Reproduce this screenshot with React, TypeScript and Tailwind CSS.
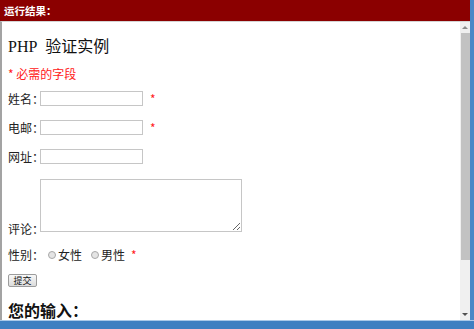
const cjk = { fontFamily: '"Noto Sans CJK SC", sans-serif' };

function Req() {
  return <span className="ml-[7px] text-[12px] leading-none text-[#ff2020]">*</span>;
}

function Field({ label, required }: { label: string; required?: boolean }) {
  return (
    <div className="flex items-center h-[15px]">
      <span className="w-[32px] shrink-0 whitespace-nowrap text-[12px] leading-none text-[#222]">{label}</span>
      <input className="w-[103px] h-[15px] border border-[#c6c6c6] bg-white p-0 outline-none" />
      {required && <Req />}
    </div>
  );
}

function Radio({ label, first }: { label: string; first?: boolean }) {
  return (
    <label className={'flex items-center ' + (first ? 'ml-[8px]' : 'ml-[9px]')}>
      <input
        type="radio"
        name="gender"
        className="appearance-none w-[8px] h-[8px] rounded-full border border-[#a8a8a8] bg-[#e4e4e4] m-0"
      />
      <span className="ml-[2px] text-[12px] leading-none text-[#222]">{label}</span>
    </label>
  );
}

export default function App() {
  return (
    <div className="w-[474px] h-[329px] flex flex-col overflow-hidden bg-white" style={cjk}>
      <div className="flex flex-1 min-h-0">
        <div className="flex-1 flex flex-col min-w-0">
          <div className="h-[21px] shrink-0 bg-[#8b0000] flex items-center pl-[4px] text-white font-bold text-[10.5px]">
            运行结果：
          </div>
          <div className="flex-1 flex min-h-0 border-l-2 border-l-[#a3a3a3] border-t border-t-[#d4d4d4]">
            <div className="flex-1 pl-[6px] flex flex-col">
              <h2
                className="mt-[15px] h-[20px] leading-[20px] text-[16px] text-[#111]"
                style={{ fontFamily: '"Liberation Serif", "Noto Sans CJK SC", serif' }}
              >
                PHP&nbsp; 验证实例
              </h2>
              <p className="mt-[9px] text-[12px] leading-[16px] text-[#ff2020]">* 必需的字段</p>

              <div className="mt-[9px] flex flex-col gap-[14px]">
                <Field label="姓名：" required />
                <Field label="电邮：" required />
                <Field label="网址：" />
              </div>

              <div className="mt-[15px] flex items-end">
                <span className="w-[32px] shrink-0 whitespace-nowrap text-[12px] leading-[14px] -mb-[4px] text-[#222]">评论：</span>
                <textarea className="w-[202px] h-[53px] border border-[#c6c6c6] bg-white p-0 resize-y outline-none block" />
              </div>

              <div className="mt-[16px] flex items-center h-[15px]">
                <span className="w-[32px] shrink-0 whitespace-nowrap text-[12px] leading-none text-[#222]">性别：</span>
                <Radio label="女性" first />
                <Radio label="男性" />
                <span className="ml-[6px] text-[12px] leading-none text-[#ff2020]">*</span>
              </div>

              <div className="mt-[13px]">
                <button className="w-[29px] h-[13px] border border-[#9c9c9c] rounded-[2px] bg-gradient-to-b from-[#f8f8f8] to-[#dcdcdc] text-[9px] leading-none text-[#111] flex items-center justify-center">
                  提交
                </button>
              </div>

              <h2 className="mt-[13px] h-[20px] leading-[20px] text-[16px] font-bold text-[#111] whitespace-nowrap">您的输入：</h2>
            </div>

            <div className="w-[10px] shrink-0 bg-[#f0f0f0] flex flex-col items-center">
              <div className="h-[11px] flex items-center justify-center">
                <div className="w-0 h-0 border-l-[3px] border-r-[3px] border-b-[3px] border-l-transparent border-r-transparent border-b-[#8a8a8a]" />
              </div>
              <div className="w-[9px] h-[227px] bg-[#c2c2c2]" />
              <div className="flex-1" />
              <div className="h-[11px] flex items-center justify-center">
                <div className="w-0 h-0 border-l-[3px] border-r-[3px] border-t-[3px] border-l-transparent border-r-transparent border-t-[#505050]" />
              </div>
            </div>
          </div>
        </div>
        <div className="w-[4px] shrink-0 bg-[#4a88c7]" />
      </div>
      <div className="h-[9px] shrink-0 bg-[#3d7fc1] border-t border-t-[#a8c8e8]" />
    </div>
  );
}
